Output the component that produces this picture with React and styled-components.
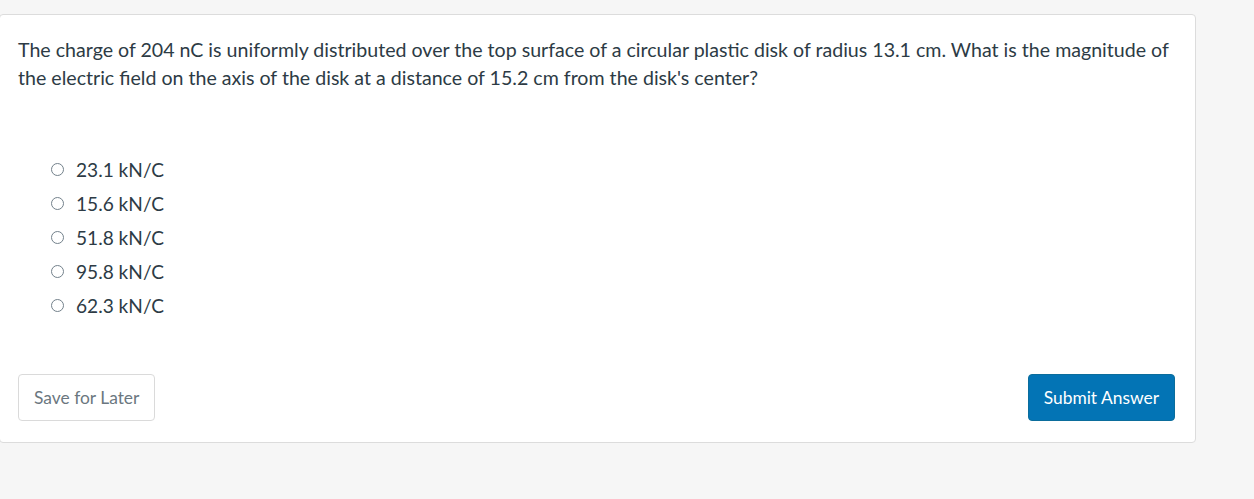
import React from "react";
import styled, { createGlobalStyle } from "styled-components";

const GlobalStyle = createGlobalStyle`
  body {
    margin: 0;
    background: #f6f6f6;
    font-family: Lato, "Liberation Sans", sans-serif;
  }
`;

const Page = styled.div`
  padding-top: 14px;
  height: 485px;
`;

const Card = styled.div`
  width: 1197px;
  margin-left: -1px;
  box-sizing: border-box;
  background: #fff;
  border: 1px solid #dcdcdc;
  border-radius: 4px;
  padding: 21px 18px 21px 18px;
`;

const Question = styled.p`
  margin: 0;
  font-size: 19.6px;
  line-height: 28px;
  color: #2d3b45;
`;

const Options = styled.ul`
  list-style: none;
  margin: 64px 0 0;
  padding: 0 0 0 33px;
  display: flex;
  flex-direction: column;
  gap: 8px;
`;

const Option = styled.li`
  display: flex;
  align-items: center;
  gap: 12px;
  height: 26px;
  font-size: 19.1px;
  color: #2d3b45;
`;

const Radio = styled.span`
  width: 11px;
  height: 11px;
  border: 1px solid #73818b;
  border-radius: 50%;
  flex-shrink: 0;
`;

const Footer = styled.div`
  display: flex;
  justify-content: space-between;
  margin-top: 56px;
  padding-right: 2px;
`;

const Button = styled.button`
  height: 47px;
  padding: 0 15px;
  font-family: inherit;
  font-size: 17.4px;
  border-radius: 4px;
  border: 1px solid ${(p) => (p.$primary ? "#0b6d9c" : "#dadada")};
  background: ${(p) => (p.$primary ? "#0374b5" : "#fff")};
  color: ${(p) => (p.$primary ? "#fff" : "#6b7780")};
`;

const answers = ["23.1 kN/C", "15.6 kN/C", "51.8 kN/C", "95.8 kN/C", "62.3 kN/C"];

export default function App() {
  return (
    <>
      <GlobalStyle />
      <Page>
        <Card>
          <Question>
            The charge of 204 nC is uniformly distributed over the top surface of a circular plastic disk of radius 13.1 cm. What is the magnitude of the electric field on the axis of the disk at a distance of 15.2 cm from the disk's center?
          </Question>
          <Options>
            {answers.map((a) => (
              <Option key={a}>
                <Radio />
                {a}
              </Option>
            ))}
          </Options>
          <Footer>
            <Button>Save for Later</Button>
            <Button $primary>Submit Answer</Button>
          </Footer>
        </Card>
      </Page>
    </>
  );
}
